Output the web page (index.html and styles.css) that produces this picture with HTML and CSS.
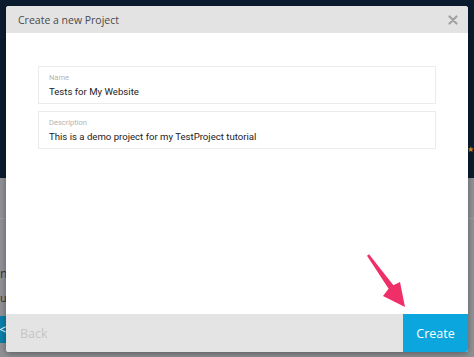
FILE: index.html
```html
<!DOCTYPE html>
<html lang="en">
  <head>
    <meta charset="UTF-8" />
    <meta name="viewport" content="width=device-width, initial-scale=1.0" />
    <title>Create a new Project</title>
    <link rel="stylesheet" href="styles.css">
  </head>
  <body>
    <!-- page behind the dialog, mostly hidden -->
    <div class="page">
      <div class="page-top">
        <span class="star">★</span>
      </div>
      <div class="page-body">
        <div class="page-rule"></div>
        <div class="page-text">n</div>
        <div class="page-text small">u</div>
        <div class="page-btn">&lt;</div>
      </div>
    </div>

    <div class="modal">
      <div class="modal-header">
        <span class="modal-title">Create a new Project</span>
        <svg class="modal-close" width="10" height="10" viewBox="0 0 10 10">
          <path d="M1.5 1.5 L8.5 8.5 M8.5 1.5 L1.5 8.5" stroke="#a2a2a2" stroke-width="2.2" stroke-linecap="round" />
        </svg>
      </div>

      <div class="modal-body">
        <div class="field">
          <label>Name</label>
          <div class="value">Tests for My Website</div>
        </div>
        <div class="field">
          <label>Description</label>
          <div class="value">This is a demo project for my TestProject tutorial</div>
        </div>
      </div>

      <div class="modal-footer">
        <button class="back-button">Back</button>
        <button class="create-button">Create</button>
      </div>

      <!-- pointer drawn over the screenshot -->
      <svg class="arrow" width="48" height="62" viewBox="0 0 48 62">
        <polygon points="7,4.3 31.4,35.3 38,32 43,57 21,46 26.6,38.7 5,5.7" fill="#ef2f68" />
      </svg>
    </div>
  </body>
</html>
```

FILE: styles.css
```css
body {
  margin: 0;
  padding: 0;
  font-family: "Open Sans", Arial, sans-serif;
  width: 474px;
  height: 357px;
  overflow: hidden;
}

.page {
  height: 357px;
  display: flex;
  flex-direction: column;
}

.page-top {
  height: 178px;
  background: #0b1c30;
  display: flex;
  align-items: flex-end;
  justify-content: flex-end;
  padding-bottom: 24px;
  box-sizing: border-box;
}

.star {
  color: #d8902a;
  font-size: 8px;
  margin-right: 0;
}

.page-body {
  flex: 1;
  background: #8f9194;
  padding-top: 40px;
  color: #333;
}

.page-rule {
  height: 1px;
  background: #9c9ea0;
  margin-bottom: 45px;
}

.page-text {
  font-size: 12px;
  line-height: 20px;
}

.page-text.small {
  font-size: 11px;
  margin-top: 4px;
}

.page-btn {
  margin-top: 8px;
  width: 40px;
  margin-left: -34px;
  height: 27px;
  line-height: 27px;
  background: #0b7fa8;
  color: #fff;
  text-align: right;
  font-size: 12px;
}

.modal {
  position: absolute;
  top: 6px;
  left: 6px;
  width: 462px;
  height: 346px;
  background: #fff;
  border-radius: 3px;
  box-shadow: 0 2px 6px rgba(0, 0, 0, 0.35);
  display: flex;
  flex-direction: column;
  overflow: hidden;
}

.modal-header {
  height: 27px;
  background: #e4e3e3;
  display: flex;
  align-items: center;
  justify-content: space-between;
  padding: 0 10px 0 12px;
}

.modal-title {
  font-size: 10.5px;
  color: #4a4a4a;
}

.modal-body {
  flex: 1;
  padding: 33px 32px 0;
  display: flex;
  flex-direction: column;
  gap: 7px;
}

.field {
  height: 38px;
  border: 1px solid #ebebeb;
  box-sizing: border-box;
  padding: 6px 10px 0;
  font-family: Roboto, "Liberation Sans", sans-serif;
}

.field label {
  display: block;
  font-size: 7.5px;
  color: #b4b4b4;
  line-height: 9px;
}

.field .value {
  font-size: 9.6px;
  color: #222;
  margin-top: 3px;
  line-height: 13px;
}

.modal-footer {
  height: 38px;
  background: #e4e4e4;
  display: flex;
  justify-content: space-between;
}

.back-button,
.create-button {
  border: none;
  font-family: "Open Sans", Arial, sans-serif;
  font-size: 12.5px;
  cursor: pointer;
}

.back-button {
  background: none;
  color: #c4c4c4;
  padding: 0 14px;
}

.create-button {
  width: 65px;
  background: #0aa6dd;
  color: #fff;
}

.arrow {
  position: absolute;
  left: 356px;
  top: 244px;
}
```
